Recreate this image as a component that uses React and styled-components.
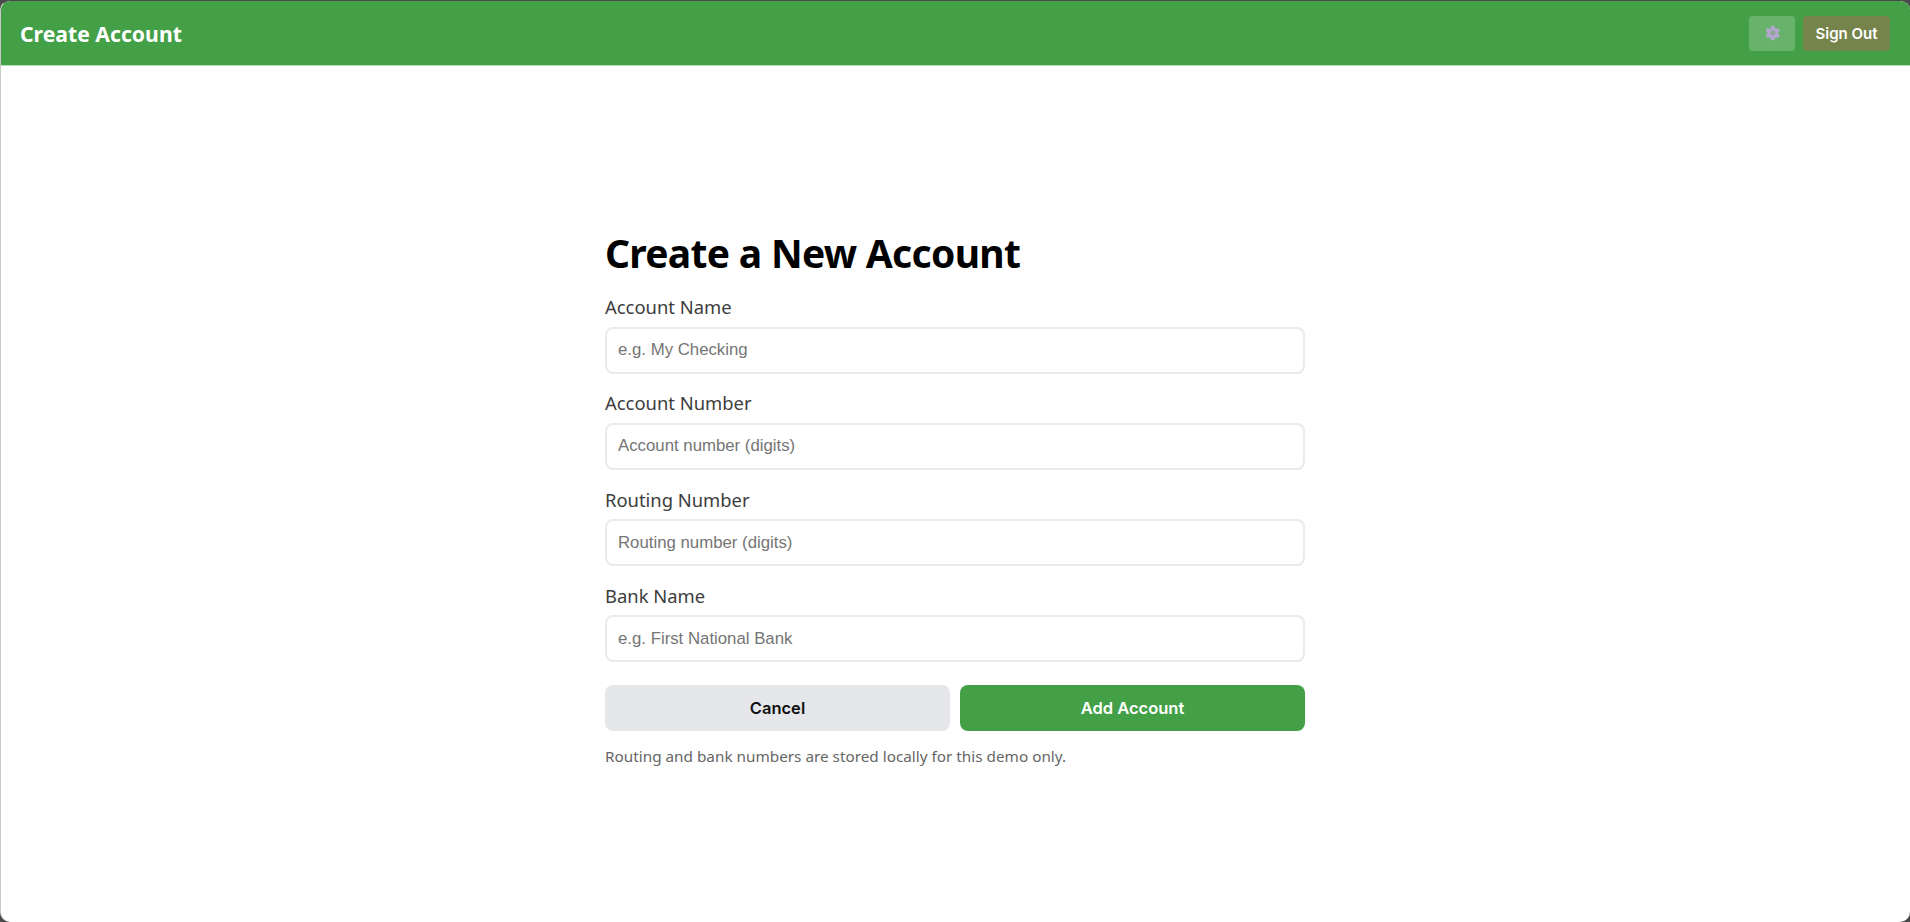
import React from 'react';
import styled, { createGlobalStyle } from 'styled-components';

const GlobalStyle = createGlobalStyle`
  html, body, #root {
    margin: 0;
    height: 100%;
  }

  body {
    background: #4a4a4a;
    font-family: 'Noto Sans', 'Open Sans', sans-serif;
  }

  * {
    box-sizing: border-box;
  }
`;

const fields = [
  { label: 'Account Name', placeholder: 'e.g. My Checking' },
  { label: 'Account Number', placeholder: 'Account number (digits)' },
  { label: 'Routing Number', placeholder: 'Routing number (digits)' },
  { label: 'Bank Name', placeholder: 'e.g. First National Bank' },
];

const GearIcon = () => (
  <svg width="20" height="20" viewBox="0 0 24 24" aria-hidden="true">
    <path
      fill="#b3a6cf"
      d="M19.4 13a7.5 7.5 0 0 0 0-2l2.1-1.6-2-3.5-2.5 1a7.6 7.6 0 0 0-1.7-1L15 3.2h-4l-.4 2.7a7.6 7.6 0 0 0-1.7 1l-2.5-1-2 3.5L6.5 11a7.5 7.5 0 0 0 0 2l-2.1 1.6 2 3.5 2.5-1a7.6 7.6 0 0 0 1.7 1l.4 2.7h4l.4-2.7a7.6 7.6 0 0 0 1.7-1l2.5 1 2-3.5z"
    />
    <circle cx="13" cy="12" r="3" fill="#8fa59a" />
  </svg>
);

const App = () => (
  <>
    <GlobalStyle />
    <Window>
      <Header>
        <HeaderTitle>Create Account</HeaderTitle>
        <HeaderActions>
          <SettingsButton type="button" aria-label="Settings">
            <GearIcon />
          </SettingsButton>
          <SignOutButton type="button">Sign Out</SignOutButton>
        </HeaderActions>
      </Header>
      <Main>
        <Form onSubmit={(e) => e.preventDefault()}>
          <Heading>Create a New Account</Heading>
          {fields.map((field) => (
            <Field key={field.label}>
              <Label>{field.label}</Label>
              <Input type="text" placeholder={field.placeholder} />
            </Field>
          ))}
          <ButtonRow>
            <ActionButton type="button">Cancel</ActionButton>
            <ActionButton type="submit" $primary>Add Account</ActionButton>
          </ButtonRow>
          <Note>Routing and bank numbers are stored locally for this demo only.</Note>
        </Form>
      </Main>
    </Window>
  </>
);

const Window = styled.div`
  height: 922px;
  display: flex;
  flex-direction: column;
  background: #fff;
  border-top: 1px solid #4a4a4a;
  border-left: 1px solid #c8c8c8;
  border-radius: 10px;
  overflow: hidden;
`;

const Header = styled.header`
  height: 64px;
  flex: none;
  display: flex;
  align-items: center;
  justify-content: space-between;
  padding: 0 20px 0 19px;
  background: #43a047;
  box-shadow: 0 1px 0 #b4dcb6;
`;

const HeaderTitle = styled.h1`
  margin: 1px 0 0;
  font-size: 21.2px;
  font-weight: 700;
  color: #fff;
`;

const HeaderActions = styled.div`
  display: flex;
  align-items: center;
  gap: 8px;
`;

const SettingsButton = styled.button`
  width: 46px;
  height: 35px;
  display: flex;
  align-items: center;
  justify-content: center;
  padding: 0;
  border: 0;
  border-radius: 4px;
  background: rgba(255, 255, 255, 0.2);
`;

const SignOutButton = styled.button`
  width: 87px;
  height: 35px;
  padding: 0;
  border: 0;
  border-radius: 4px;
  background: #75844b;
  color: #fff;
  font-family: Inter, sans-serif;
  font-size: 15px;
  font-weight: 600;
`;

const Main = styled.main`
  flex: 1;
  display: flex;
  justify-content: center;
  padding-top: 160px;
`;

const Form = styled.form`
  width: 700px;
  margin-right: 1px;
  display: flex;
  flex-direction: column;
`;

const Heading = styled.h2`
  margin: 0 0 14px;
  font-size: 39px;
  line-height: 56px;
  letter-spacing: -0.7px;
  font-weight: 700;
  color: #000;
`;

const Field = styled.div`
  display: flex;
  flex-direction: column;
  gap: 7.5px;
  margin-bottom: 17.8px;
`;

const Label = styled.label`
  font-size: 18.4px;
  line-height: 24px;
  color: #3d3d3d;
`;

const Input = styled.input`
  height: 47px;
  padding: 0 11px;
  border: 2px solid #e8eaee;
  border-radius: 8px;
  outline: none;
  font-family: 'Liberation Sans', Arial, sans-serif;
  font-size: 16.8px;

  &::placeholder {
    color: #757575;
  }
`;

const ButtonRow = styled.div`
  display: grid;
  grid-template-columns: 1fr 1fr;
  gap: 10px;
  margin-top: 4.5px;
`;

const ActionButton = styled.button`
  height: 46px;
  border: 0;
  border-radius: 8px;
  background: ${(p) => (p.$primary ? '#43a047' : '#e5e7eb')};
  color: ${(p) => (p.$primary ? '#fff' : '#111')};
  font-family: Inter, sans-serif;
  font-size: 16.5px;
  font-weight: 600;
`;

const Note = styled.p`
  margin: 14px 0 0;
  font-size: 15.3px;
  line-height: 22px;
  color: #666;
`;

export default App;
